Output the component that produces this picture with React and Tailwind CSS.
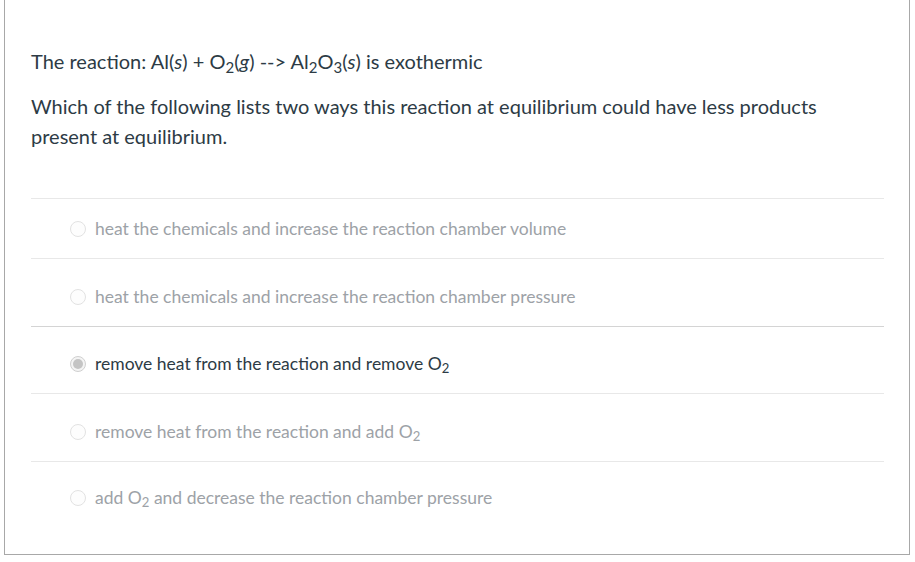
import React from "react";

const answers = [
  { text: "heat the chemicals and increase the reaction chamber volume", h: "h-[60px]", pt: "pt-[18px]" },
  { text: "heat the chemicals and increase the reaction chamber pressure", h: "h-[68px]", pt: "pt-[26px]" },
  {
    text: (
      <>
        remove heat from the reaction and remove O<sub>2</sub>
      </>
    ),
    h: "h-[67px]",
    pt: "pt-[25px]",
    selected: true,
  },
  {
    text: (
      <>
        remove heat from the reaction and add O<sub>2</sub>
      </>
    ),
    h: "h-[68px]",
    pt: "pt-[26px]",
  },
  {
    text: (
      <>
        add O<sub>2</sub> and decrease the reaction chamber pressure
      </>
    ),
    h: "h-[93px]",
    pt: "pt-[24px]",
  },
];

export default function App() {
  return (
    <div className="w-[915px] h-[562px] bg-white" style={{ fontFamily: "Lato, 'Open Sans', sans-serif" }}>
      <div className="ml-[4px] w-[906px] border-x border-b border-[#a8a8a8] pt-[46px]">
        {/* Question */}
        <div className="px-[26px] text-[20px] leading-[30px] text-[#2d3b45]">
          <p>
            The reaction: Al(<i>s</i>) + O<sub>2</sub>(<i>g</i>) --&gt; Al<sub>2</sub>O<sub>3</sub>(<i>s</i>) is exothermic
          </p>
          <p className="mt-[15px]">
            Which of the following lists two ways this reaction at equilibrium could have less products present at equilibrium.
          </p>
        </div>

        {/* Answers */}
        <div className="mt-[47px] ml-[26px] mr-[25px]">
          {answers.map((a, i) => (
            <div
              key={i}
              className={`${a.h} ${a.pt} border-t ${
                a.selected ? "border-[#d4d4d4]" : "border-[#e8e8e8]"
              } flex items-start`}
            >
              <div className="w-[64px] flex justify-end pr-[9px] pt-[4px]">
                {a.selected ? (
                  <div className="w-[16px] h-[16px] rounded-full border border-[#d0d0d0] bg-[#f4f4f4] flex items-center justify-center">
                    <div className="w-[10px] h-[10px] rounded-full bg-[#c4c4c4]" />
                  </div>
                ) : (
                  <div className="w-[16px] h-[16px] rounded-full border border-[#e2e2e2] bg-[#fdfdfd]" />
                )}
              </div>
              <div
                className={`text-[17.5px] leading-[24px] ${
                  a.selected ? "text-[#2d3b45]" : "text-[#9da2a7]"
                }`}
              >
                {a.text}
              </div>
            </div>
          ))}
        </div>
      </div>
    </div>
  );
}
